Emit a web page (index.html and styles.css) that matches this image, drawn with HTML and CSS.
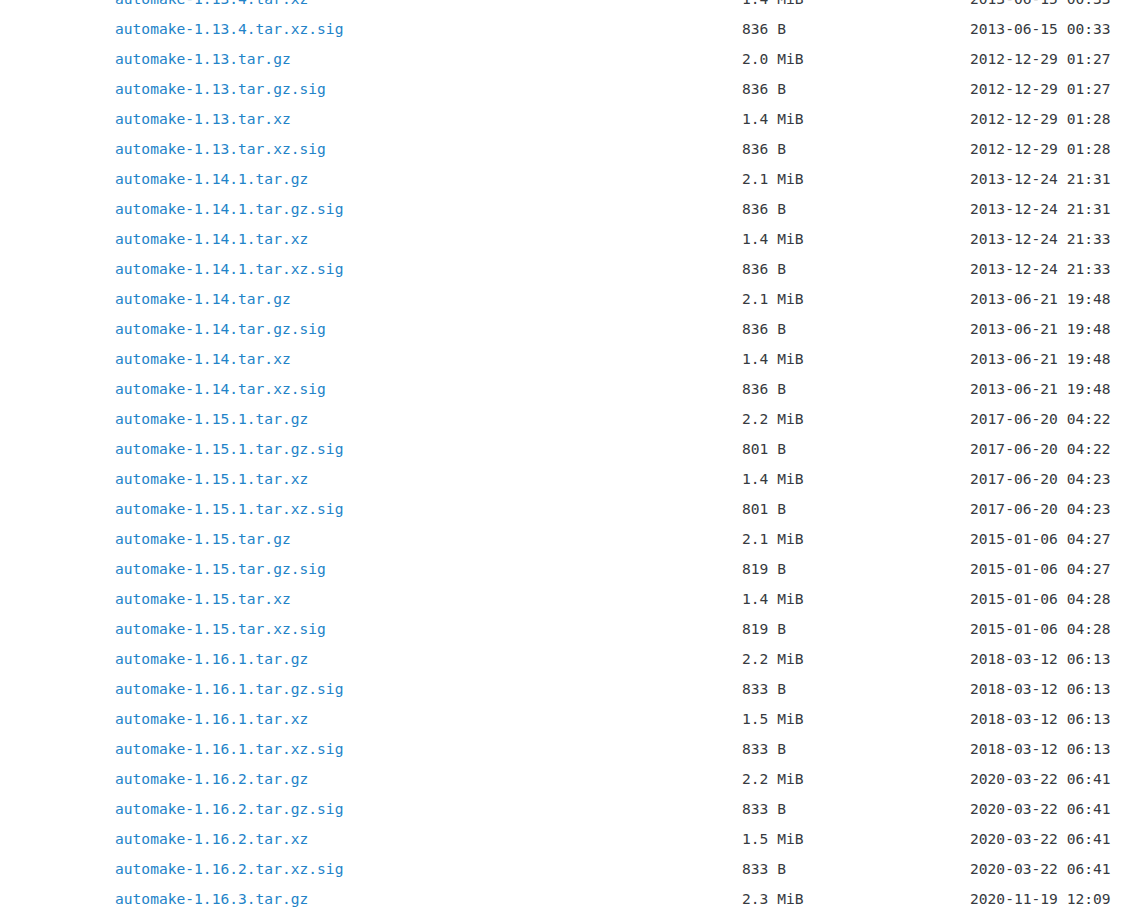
FILE: index.html
```html
<!DOCTYPE html>
<html>
<head>
<meta charset="utf-8">
<link rel="stylesheet" href="styles.css">
</head>
<body>
<div class="listing">
  <div class="row"><a class="name" href="#">automake-1.13.4.tar.xz</a><span class="size">1.4 MiB</span><span class="date">2013-06-15 00:33</span></div>
  <div class="row"><a class="name" href="#">automake-1.13.4.tar.xz.sig</a><span class="size">836 B</span><span class="date">2013-06-15 00:33</span></div>
  <div class="row"><a class="name" href="#">automake-1.13.tar.gz</a><span class="size">2.0 MiB</span><span class="date">2012-12-29 01:27</span></div>
  <div class="row"><a class="name" href="#">automake-1.13.tar.gz.sig</a><span class="size">836 B</span><span class="date">2012-12-29 01:27</span></div>
  <div class="row"><a class="name" href="#">automake-1.13.tar.xz</a><span class="size">1.4 MiB</span><span class="date">2012-12-29 01:28</span></div>
  <div class="row"><a class="name" href="#">automake-1.13.tar.xz.sig</a><span class="size">836 B</span><span class="date">2012-12-29 01:28</span></div>
  <div class="row"><a class="name" href="#">automake-1.14.1.tar.gz</a><span class="size">2.1 MiB</span><span class="date">2013-12-24 21:31</span></div>
  <div class="row"><a class="name" href="#">automake-1.14.1.tar.gz.sig</a><span class="size">836 B</span><span class="date">2013-12-24 21:31</span></div>
  <div class="row"><a class="name" href="#">automake-1.14.1.tar.xz</a><span class="size">1.4 MiB</span><span class="date">2013-12-24 21:33</span></div>
  <div class="row"><a class="name" href="#">automake-1.14.1.tar.xz.sig</a><span class="size">836 B</span><span class="date">2013-12-24 21:33</span></div>
  <div class="row"><a class="name" href="#">automake-1.14.tar.gz</a><span class="size">2.1 MiB</span><span class="date">2013-06-21 19:48</span></div>
  <div class="row"><a class="name" href="#">automake-1.14.tar.gz.sig</a><span class="size">836 B</span><span class="date">2013-06-21 19:48</span></div>
  <div class="row"><a class="name" href="#">automake-1.14.tar.xz</a><span class="size">1.4 MiB</span><span class="date">2013-06-21 19:48</span></div>
  <div class="row"><a class="name" href="#">automake-1.14.tar.xz.sig</a><span class="size">836 B</span><span class="date">2013-06-21 19:48</span></div>
  <div class="row"><a class="name" href="#">automake-1.15.1.tar.gz</a><span class="size">2.2 MiB</span><span class="date">2017-06-20 04:22</span></div>
  <div class="row"><a class="name" href="#">automake-1.15.1.tar.gz.sig</a><span class="size">801 B</span><span class="date">2017-06-20 04:22</span></div>
  <div class="row"><a class="name" href="#">automake-1.15.1.tar.xz</a><span class="size">1.4 MiB</span><span class="date">2017-06-20 04:23</span></div>
  <div class="row"><a class="name" href="#">automake-1.15.1.tar.xz.sig</a><span class="size">801 B</span><span class="date">2017-06-20 04:23</span></div>
  <div class="row"><a class="name" href="#">automake-1.15.tar.gz</a><span class="size">2.1 MiB</span><span class="date">2015-01-06 04:27</span></div>
  <div class="row"><a class="name" href="#">automake-1.15.tar.gz.sig</a><span class="size">819 B</span><span class="date">2015-01-06 04:27</span></div>
  <div class="row"><a class="name" href="#">automake-1.15.tar.xz</a><span class="size">1.4 MiB</span><span class="date">2015-01-06 04:28</span></div>
  <div class="row"><a class="name" href="#">automake-1.15.tar.xz.sig</a><span class="size">819 B</span><span class="date">2015-01-06 04:28</span></div>
  <div class="row"><a class="name" href="#">automake-1.16.1.tar.gz</a><span class="size">2.2 MiB</span><span class="date">2018-03-12 06:13</span></div>
  <div class="row"><a class="name" href="#">automake-1.16.1.tar.gz.sig</a><span class="size">833 B</span><span class="date">2018-03-12 06:13</span></div>
  <div class="row"><a class="name" href="#">automake-1.16.1.tar.xz</a><span class="size">1.5 MiB</span><span class="date">2018-03-12 06:13</span></div>
  <div class="row"><a class="name" href="#">automake-1.16.1.tar.xz.sig</a><span class="size">833 B</span><span class="date">2018-03-12 06:13</span></div>
  <div class="row"><a class="name" href="#">automake-1.16.2.tar.gz</a><span class="size">2.2 MiB</span><span class="date">2020-03-22 06:41</span></div>
  <div class="row"><a class="name" href="#">automake-1.16.2.tar.gz.sig</a><span class="size">833 B</span><span class="date">2020-03-22 06:41</span></div>
  <div class="row"><a class="name" href="#">automake-1.16.2.tar.xz</a><span class="size">1.5 MiB</span><span class="date">2020-03-22 06:41</span></div>
  <div class="row"><a class="name" href="#">automake-1.16.2.tar.xz.sig</a><span class="size">833 B</span><span class="date">2020-03-22 06:41</span></div>
  <div class="row"><a class="name" href="#">automake-1.16.3.tar.gz</a><span class="size">2.3 MiB</span><span class="date">2020-11-19 12:09</span></div>
</div>
</body>
</html>
```
FILE: styles.css
```css
html, body {
  margin: 0;
  padding: 0;
  background: #ffffff;
  overflow: hidden;
}
.listing {
  margin-top: -16px;
  padding-left: 115px;
  font-family: "DejaVu Sans Mono", "Liberation Mono", monospace;
  font-size: 14.6px;
  color: #363a40;
}
.row {
  display: grid;
  grid-template-columns: 627px 228px auto;
  height: 30px;
  line-height: 30px;
  white-space: nowrap;
}
.name {
  color: #2283c8;
  text-decoration: none;
}
```
